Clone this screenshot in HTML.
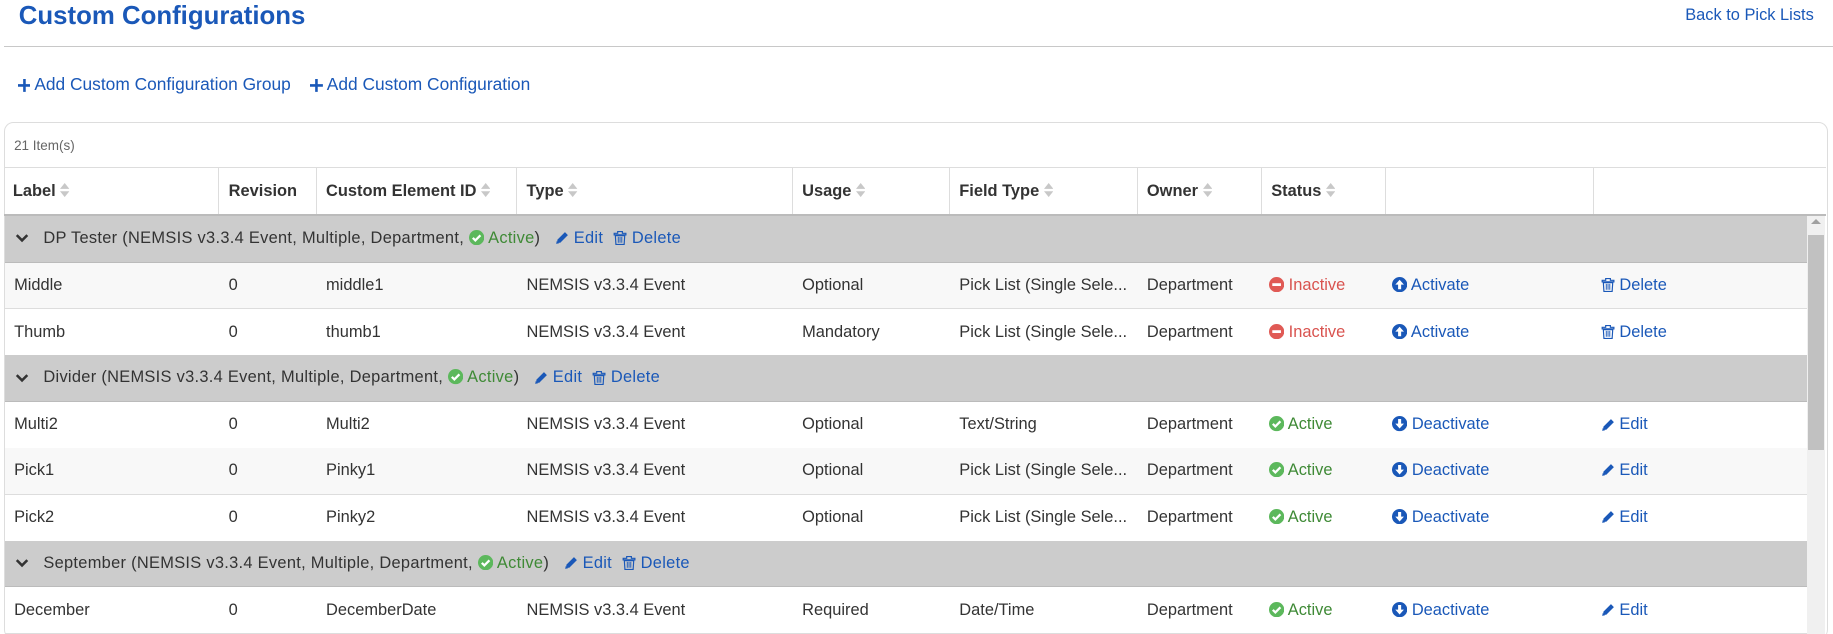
<!DOCTYPE html>
<html><head><meta charset="utf-8"><style>
html,body{margin:0;padding:0;background:#fff;overflow:hidden}
body{width:1563px;height:541px;zoom:1.17274;position:relative;font-family:"Liberation Sans",sans-serif;color:#333;font-size:14px}
.a{position:absolute;white-space:nowrap}
.blue{color:#1a58b8}
h1{position:absolute;left:16px;top:2px;margin:0;font-size:22px;font-weight:bold;color:#1a58b8}
.hr{position:absolute;left:3px;right:0;top:39px;height:1px;background:#c8c8c8}
.box{position:absolute;left:3px;top:104px;width:1554px;height:440px;border:1px solid #ddd;border-radius:8px;border-bottom:none}
.row{position:absolute;left:4px;width:1537px;height:39px;border-bottom:1px solid #ddd}
.grp{background:#ccc;border-bottom:1px solid #bbb}
.grp .c{letter-spacing:0.25px}
.c{position:absolute;top:0;line-height:39px;white-space:nowrap}
.hd{position:absolute;left:3px;top:142px;width:1554px;height:40px;border-top:1px solid #ddd;border-bottom:2px solid #bbb}
.hd .c{font-weight:bold;line-height:40px;height:40px;border-right:1px solid #ddd;padding-left:8px;box-sizing:border-box}
.sort{display:inline-block;width:8px;height:12px;vertical-align:-1px;margin-left:4px}
svg{vertical-align:-2px}
.act{color:#3f8a36}.ina{color:#d9534f}
.add{font-size:14.8px}
.gi{margin-left:12px}
</style></head><body>
<h1>Custom Configurations</h1>
<div class="a blue" style="left:1437px;top:5px;font-size:14px">Back to Pick Lists</div>
<div class="hr"></div>
<div class="a blue add" style="left:15px;top:63px">
<svg width="11" height="11" viewBox="0 0 10 10"><path d="M4 0h2v4h4v2H6v4H4V6H0V4h4z" fill="#1a58b8"/></svg> Add Custom Configuration Group &nbsp;&nbsp;
<svg width="11" height="11" viewBox="0 0 10 10"><path d="M4 0h2v4h4v2H6v4H4V6H0V4h4z" fill="#1a58b8"/></svg> Add Custom Configuration</div>
<div class="box"></div>
<div class="a" style="left:12px;top:118px;font-size:11.5px;color:#666">21 Item(s)</div>
<svg width="0" height="0" style="position:absolute"><defs>
<symbol id="s" viewBox="0 0 8 12"><path d="M4 0L8 5H0z M4 12L8 7H0z" fill="#c8c8c8"/></symbol>
<symbol id="ok" viewBox="0 0 12 12"><circle cx="6" cy="6" r="6" fill="#5cb85c"/><path d="M3 6.2l2 2 4-4" stroke="#fff" stroke-width="1.8" fill="none"/></symbol>
<symbol id="no" viewBox="0 0 12 12"><circle cx="6" cy="6" r="6" fill="#e05a55"/><rect x="2.6" y="4.9" width="6.8" height="2.2" fill="#fff"/></symbol>
<symbol id="up" viewBox="0 0 12 12"><circle cx="6" cy="6" r="6" fill="#1a58b8"/><path d="M6 2.2L9.4 6H7.2v3.6H4.8V6H2.6z" fill="#fff"/></symbol>
<symbol id="dn" viewBox="0 0 12 12"><circle cx="6" cy="6" r="6" fill="#1a58b8"/><path d="M6 9.8L9.4 6H7.2V2.4H4.8V6H2.6z" fill="#fff"/></symbol>
<symbol id="ed" viewBox="0 0 12 12"><path d="M8.5 1l2.5 2.5-6.5 6.5H2V7.5z M1.5 8.5L3.5 10.5 1 11z" fill="#1a58b8"/></symbol>
<symbol id="tr" viewBox="0 0 12 12"><path d="M4 0.5h4v1.5h3v1.3H1V2h3z M2 4h8l-.5 7.5h-7z" fill="none" stroke="#1a58b8" stroke-width="1"/><path d="M4.5 5v5M6 5v5M7.5 5v5" stroke="#1a58b8" stroke-width="0.8"/></symbol>
<symbol id="ch" viewBox="0 0 12 12"><path d="M1.5 3.5L6 8l4.5-4.5" stroke="#333" stroke-width="2.2" fill="none"/></symbol>
</defs></svg>
<div class="hd">
<div class="c" style="left:0;width:184px">Label<svg class="sort"><use href="#s"/></svg></div>
<div class="c" style="left:184px;width:83px">Revision</div>
<div class="c" style="left:267px;width:171px">Custom Element ID<svg class="sort"><use href="#s"/></svg></div>
<div class="c" style="left:438px;width:235px">Type<svg class="sort"><use href="#s"/></svg></div>
<div class="c" style="left:673px;width:134px">Usage<svg class="sort"><use href="#s"/></svg></div>
<div class="c" style="left:807px;width:160px">Field Type<svg class="sort"><use href="#s"/></svg></div>
<div class="c" style="left:967px;width:106px">Owner<svg class="sort"><use href="#s"/></svg></div>
<div class="c" style="left:1073px;width:106px">Status<svg class="sort"><use href="#s"/></svg></div>
<div class="c" style="left:1179px;width:177px"></div>
<div class="c" style="left:1356px;width:197px;border-right:none"></div>
</div>

<div class="row grp" style="top:184px"><div class="c" style="left:9px"><svg width="12" height="12"><use href="#ch"/></svg><span class="gi">DP Tester (NEMSIS v3.3.4 Event, Multiple, Department, </span><svg width="13" height="13"><use href="#ok"/></svg><span class="act"> Active</span>) &nbsp;&nbsp;<span class="blue"><svg width="12" height="12"><use href="#ed"/></svg> Edit &nbsp;<svg width="12" height="12"><use href="#tr"/></svg> Delete</span></div></div>

<div class="row" style="top:224px;background:#f8f8f8"><div class="c" style="left:8px">Middle</div><div class="c" style="left:191px">0</div><div class="c" style="left:274px">middle1</div><div class="c" style="left:445px">NEMSIS v3.3.4 Event</div><div class="c" style="left:680px">Optional</div><div class="c" style="left:814px">Pick List (Single Sele...</div><div class="c" style="left:974px">Department</div><div class="c ina" style="left:1078px"><svg width="13" height="13"><use href="#no"/></svg> Inactive</div><div class="c blue" style="left:1183px"><svg width="13" height="13"><use href="#up"/></svg> Activate</div><div class="c blue" style="left:1361px"><svg width="12" height="12"><use href="#tr"/></svg> Delete</div></div>

<div class="row" style="top:264px"><div class="c" style="left:8px">Thumb</div><div class="c" style="left:191px">0</div><div class="c" style="left:274px">thumb1</div><div class="c" style="left:445px">NEMSIS v3.3.4 Event</div><div class="c" style="left:680px">Mandatory</div><div class="c" style="left:814px">Pick List (Single Sele...</div><div class="c" style="left:974px">Department</div><div class="c ina" style="left:1078px"><svg width="13" height="13"><use href="#no"/></svg> Inactive</div><div class="c blue" style="left:1183px"><svg width="13" height="13"><use href="#up"/></svg> Activate</div><div class="c blue" style="left:1361px"><svg width="12" height="12"><use href="#tr"/></svg> Delete</div></div>

<div class="row grp" style="top:303px"><div class="c" style="left:9px"><svg width="12" height="12"><use href="#ch"/></svg><span class="gi">Divider (NEMSIS v3.3.4 Event, Multiple, Department, </span><svg width="13" height="13"><use href="#ok"/></svg><span class="act"> Active</span>) &nbsp;&nbsp;<span class="blue"><svg width="12" height="12"><use href="#ed"/></svg> Edit &nbsp;<svg width="12" height="12"><use href="#tr"/></svg> Delete</span></div></div>

<div class="row" style="top:343px"><div class="c" style="left:8px">Multi2</div><div class="c" style="left:191px">0</div><div class="c" style="left:274px">Multi2</div><div class="c" style="left:445px">NEMSIS v3.3.4 Event</div><div class="c" style="left:680px">Optional</div><div class="c" style="left:814px">Text/String</div><div class="c" style="left:974px">Department</div><div class="c act" style="left:1078px"><svg width="13" height="13"><use href="#ok"/></svg> Active</div><div class="c blue" style="left:1183px"><svg width="13" height="13"><use href="#dn"/></svg> Deactivate</div><div class="c blue" style="left:1361px"><svg width="12" height="12"><use href="#ed"/></svg> Edit</div></div>

<div class="row" style="top:382px;background:#f8f8f8"><div class="c" style="left:8px">Pick1</div><div class="c" style="left:191px">0</div><div class="c" style="left:274px">Pinky1</div><div class="c" style="left:445px">NEMSIS v3.3.4 Event</div><div class="c" style="left:680px">Optional</div><div class="c" style="left:814px">Pick List (Single Sele...</div><div class="c" style="left:974px">Department</div><div class="c act" style="left:1078px"><svg width="13" height="13"><use href="#ok"/></svg> Active</div><div class="c blue" style="left:1183px"><svg width="13" height="13"><use href="#dn"/></svg> Deactivate</div><div class="c blue" style="left:1361px"><svg width="12" height="12"><use href="#ed"/></svg> Edit</div></div>

<div class="row" style="top:422px"><div class="c" style="left:8px">Pick2</div><div class="c" style="left:191px">0</div><div class="c" style="left:274px">Pinky2</div><div class="c" style="left:445px">NEMSIS v3.3.4 Event</div><div class="c" style="left:680px">Optional</div><div class="c" style="left:814px">Pick List (Single Sele...</div><div class="c" style="left:974px">Department</div><div class="c act" style="left:1078px"><svg width="13" height="13"><use href="#ok"/></svg> Active</div><div class="c blue" style="left:1183px"><svg width="13" height="13"><use href="#dn"/></svg> Deactivate</div><div class="c blue" style="left:1361px"><svg width="12" height="12"><use href="#ed"/></svg> Edit</div></div>

<div class="row grp" style="top:461px"><div class="c" style="left:9px"><svg width="12" height="12"><use href="#ch"/></svg><span class="gi">September (NEMSIS v3.3.4 Event, Multiple, Department, </span><svg width="13" height="13"><use href="#ok"/></svg><span class="act"> Active</span>) &nbsp;&nbsp;<span class="blue"><svg width="12" height="12"><use href="#ed"/></svg> Edit &nbsp;<svg width="12" height="12"><use href="#tr"/></svg> Delete</span></div></div>

<div class="row" style="top:501px"><div class="c" style="left:8px">December</div><div class="c" style="left:191px">0</div><div class="c" style="left:274px">DecemberDate</div><div class="c" style="left:445px">NEMSIS v3.3.4 Event</div><div class="c" style="left:680px">Required</div><div class="c" style="left:814px">Date/Time</div><div class="c" style="left:974px">Department</div><div class="c act" style="left:1078px"><svg width="13" height="13"><use href="#ok"/></svg> Active</div><div class="c blue" style="left:1183px"><svg width="13" height="13"><use href="#dn"/></svg> Deactivate</div><div class="c blue" style="left:1361px"><svg width="12" height="12"><use href="#ed"/></svg> Edit</div></div>

<div class="a" style="left:1541px;top:184px;width:15px;height:360px;background:#f0f0f0"></div>
<div class="a" style="left:1544px;top:187px;width:0;height:0;border-left:5px solid transparent;border-right:5px solid transparent;border-bottom:5px solid #a0a0a0"></div>
<div class="a" style="left:1542px;top:200px;width:13px;height:184px;background:#c1c1c1"></div>
</body></html>
